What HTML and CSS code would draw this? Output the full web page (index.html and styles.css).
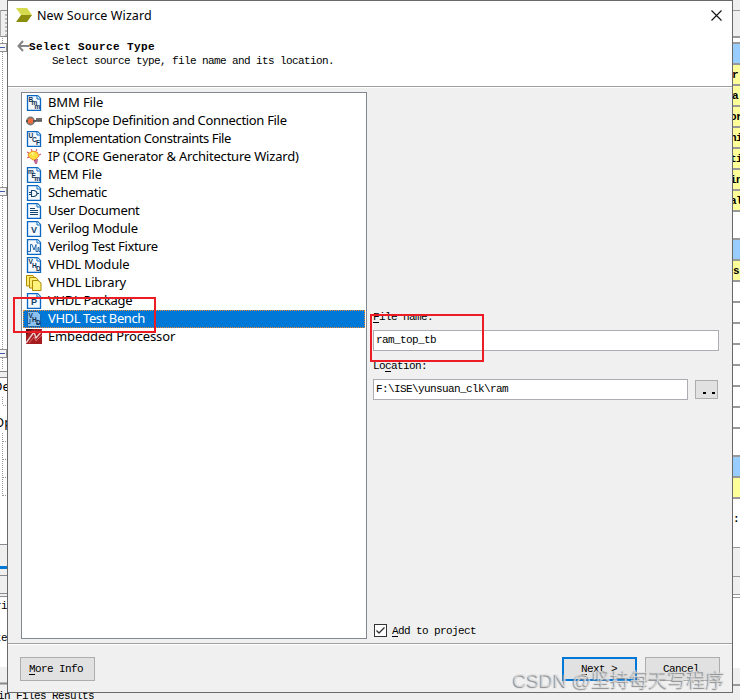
FILE: index.html
```
<!DOCTYPE html>
<html lang="en">
<head>
<meta charset="utf-8">
<title>New Source Wizard</title>
<link rel="stylesheet" href="styles.css">
</head>
<body>
<svg width="0" height="0" class="defs">
  <defs>
    <g id="doc"><path d="M1.5 .5H11.5L14.5 3.5V15.5H1.5Z" fill="#f4faff" stroke="#0868c4" stroke-width="1.3"/><path d="M11 .5V4H14.5" fill="#fff" stroke="#0868c4"/></g>
  </defs>
</svg>
<div class="desktop">
  <div class="backdrop">
    <svg class="left-strip" width="8" height="700" viewBox="0 0 8 700">
      <rect width="8" height="700" fill="#fff"/>
      <rect width="8" height="37" fill="#efefef"/>
      <path d="M0 10.5H7M0 36.5H8" stroke="#8a8a8a" fill="none"/>
      <path d="M.5 10V37" stroke="#aaa"/><path d="M6 14V36" stroke="#bbb" stroke-width="2" stroke-dasharray="2 2"/>
      <path d="M2.5 38V370M2.5 397V405M3 405.5H8M2.5 433V496M3 441.5H8M3 459.5H8M3 477.5H8M3 495.5H8" stroke="#999" stroke-dasharray="1 1" fill="none"/>
      <g fill="#f5f5f5" stroke="#919191"><rect x="-2.5" y="43.5" width="9" height="8"/><rect x="-2.5" y="187.5" width="9" height="8"/><rect x="-2.5" y="349.5" width="9" height="8"/></g>
      <path d="M0 47.5H5M0 191.5H5M0 353.5H5" stroke="#405aa8"/>
      <rect y="371" width="8" height="7" fill="#efefef"/>
      <path d="M0 371.5H8M0 377.5H8" stroke="#888"/>
      <text x="-7" y="391" class="ui">De</text><text x="-6" y="427" class="ui">Op</text>
      <rect y="544" width="8" height="53" fill="#efefef"/>
      <path d="M0 544.5H8M0 575.5H8M0 593.5H8M0 596.5H8" stroke="#8a8a90"/>
      <rect y="566" width="8" height="3" fill="#0078d7"/>
      <text x="-5" y="609" class="mono">ri</text><text x="-5" y="641" class="mono">te</text>
      <rect y="667" width="8" height="33" fill="#efefef"/>
      <path d="M0 683.5H8" stroke="#888" stroke-width="2"/>
    </svg>
    <div class="right-strip">
      <i class="cell gray h11"></i><i class="cell gray thick h27"></i><i class="cell h6"></i>
      <i class="cell blue"></i><i class="cell yellow">r</i><i class="cell yellow">a</i><i class="cell yellow cut">or</i><i class="cell yellow cut">ni</i><i class="cell yellow cut">ti</i><i class="cell yellow cut">in</i><i class="cell yellow cut">al</i>
      <i class="cell h28"></i><i class="cell blue"></i><i class="cell yellow s">s</i>
      <i class="cell"></i><i class="cell"></i><i class="cell"></i><i class="cell"></i><i class="cell"></i><i class="cell"></i><i class="cell"></i>
      <i class="cell h28"></i><i class="cell blue"></i><i class="cell yellow"></i>
      <i class="cell h49">::</i><i class="cell gray h29"></i><i class="cell gray h18"></i><i class="cell h3"></i><i class="cell plain h70"></i><i class="cell gray thick h18"></i>
    </div>
    <div class="results">in Files Results</div>
  </div>

  <main class="window">
    <header class="head">
      <div class="titlebar">
        <svg class="logo" width="17" height="15" viewBox="0 0 17 15"><path d="M0 0H11L16 7H5Z" fill="#d5db4c"/><path d="M5 7H16L11 14H0Z" fill="#8b8d0c"/></svg>
        <span class="title">New Source Wizard</span>
        <svg class="close" width="11" height="11" viewBox="0 0 11 11"><path d="M.5 .5L10.5 10.5M10.5 .5L.5 10.5" stroke="#111" stroke-width="1.1"/></svg>
      </div>
      <div class="heading">
        <svg class="back" width="13" height="12" viewBox="0 0 13 12"><path d="M6 1L1.5 6L6 11M2 6H12.5" fill="none" stroke="#858585" stroke-width="2"/></svg>
        <b>Select Source Type</b>
      </div>
      <p class="sub">Select source type, file name and its location.</p>
    </header>

    <section class="body">
      <ul class="types">
        <li class="wide"><svg viewBox="0 0 16 16"><use href="#doc"/><g class="g"><text x="2.5" y="7">B</text><text x="5.5" y="10">m</text><text x="8.5" y="13.5">m</text></g></svg><span>BMM File</span></li>
        <li><svg viewBox="0 0 16 16"><path d="M8 8H16M11 8V5M13 8V5M15 8V5" stroke="#555" stroke-width="1.7" fill="none"/><circle cx="4.5" cy="8" r="3.6" fill="#f36b3b" stroke="#777" stroke-width="1.6"/><path d="M0 8H2M7 8H10" stroke="#555" stroke-width="2"/></svg><span>ChipScope Definition and Connection File</span></li>
        <li class="tight"><svg viewBox="0 0 16 16"><use href="#doc"/><g class="g"><text x="2.5" y="7">U</text><text x="6" y="10.5">C</text><text x="10" y="14">F</text></g></svg><span>Implementation Constraints File</span></li>
        <li class="mid"><svg viewBox="0 0 16 16"><path d="M2 5L6 2L11 3L13 7L9 11H7L3 8Z" fill="#ffdf3d" stroke="#f08b29"/><path d="M5 4L8 3L7 7" fill="#fff59a"/><path d="M1 3L3 4M5 0L6 2M11 0L10 2M15 5L13 6M1 9L3 8" stroke="#c94369"/><path d="M8 11L12 10L11 15H9Z" fill="#9e3268"/><path d="M9 12H12M9 14H11" stroke="#eba2bd"/></svg><span>IP (CORE Generator &amp; Architecture Wizard)</span></li>
        <li class="wide"><svg viewBox="0 0 16 16"><use href="#doc"/><g class="g"><text x="2" y="6.5">m</text><text x="5.5" y="10.5">E</text><text x="8.5" y="14">m</text></g></svg><span>MEM File</span></li>
        <li class="tight"><svg viewBox="0 0 16 16"><use href="#doc"/><path d="M5.5 5.5H8Q11 6 11 8.5Q11 11 8 11.5H5.5ZM3 7.5H5M3 9.5H5M11 8.5H13" fill="none" stroke="#17456e" stroke-width="1.1"/></svg><span>Schematic</span></li>
        <li><svg viewBox="0 0 16 16"><use href="#doc"/><path d="M4 5.5H9M4 7.5H12M4 9.5H12M4 11.5H12" stroke="#17456e"/></svg><span>User Document</span></li>
        <li class="mid"><svg viewBox="0 0 16 16"><use href="#doc"/><text x="5" y="12" class="big">V</text></svg><span>Verilog Module</span></li>
        <li><svg viewBox="0 0 16 16"><use href="#doc"/><path d="M2 12.5H4.5V5.5H6L8 11L10 5.5V12.5H12V8.5H13V12.5H15" fill="none" stroke="#286bab"/></svg><span>Verilog Test Fixture</span></li>
        <li class="mid"><svg viewBox="0 0 16 16"><use href="#doc"/><g class="g"><text x="2.5" y="7">V</text><text x="6" y="10.5">H</text><text x="10" y="14">D</text></g></svg><span>VHDL Module</span></li>
        <li class="wide"><svg viewBox="0 0 16 16"><g fill="#ffec70" stroke="#ad8a00"><path d="M.5 .5H7L9 3V11H.5Z"/><path d="M3.5 2.5H10L12 5V13H3.5Z"/><path d="M6.5 5.5H12L15 8V15.5H6.5Z" fill="#fff47e"/></g></svg><span>VHDL Library</span></li>
        <li><svg viewBox="0 0 16 16"><use href="#doc"/><text x="5" y="12" class="big">P</text></svg><span>VHDL Package</span></li>
        <li class="selected tight"><svg viewBox="0 0 16 16"><path d="M1.5 .5H11.5L14.5 3.5V15.5H1.5Z" fill="#8cc0ec" stroke="#1765ae"/><path d="M2 12.5H4V8M10 12.5H15" stroke="#225b91" fill="none"/><g class="g"><text x="2.5" y="7">V</text><text x="6" y="10.5">H</text><text x="10" y="14">D</text></g></svg><span>VHDL Test Bench</span></li>
        <li class="wide"><svg viewBox="0 0 16 16"><rect width="16" height="15" fill="#a51c20"/><path d="M0 0H7L0 6Z" fill="#4d1518"/><path d="M0 14L8 3L10 9L16 2" stroke="#edcccc" fill="none" stroke-width="1.4"/><path d="M3 14L8 8L10 12L16 6" stroke="#df6264" fill="none"/></svg><span>Embedded Processor</span></li>
      </ul>

      <div class="form">
        <label class="lab"><u>F</u>ile name:</label>
        <div class="field name">ram_top_tb</div>
        <label class="lab loc">Lo<u>c</u>ation:</label>
        <div class="row"><div class="field path">F:\ISE\yunsuan_clk\ram</div><div class="browse"><i></i><i></i></div></div>
        <div class="check"><svg width="13" height="13" viewBox="0 0 13 13"><rect x=".5" y=".5" width="12" height="12" fill="#fff" stroke="#333"/><path d="M2.5 6.5L5 9L10.5 3.5" fill="none" stroke="#333" stroke-width="1.4"/></svg><span><u>A</u>dd to project</span></div>
      </div>
    </section>

    <footer class="foot">
      <div class="btn more"><span><u>M</u>ore Info</span></div>
      <div class="btn primary"><span><u>N</u>ext &gt;</span></div>
      <div class="btn more"><span>Cancel</span></div>
    </footer>
  </main>
  <div class="mark mark-type"></div>
  <div class="mark mark-name"></div>
  <div class="watermark">CSDN @坚持每天写程序</div>
</div>
</body>
</html>
```
FILE: styles.css
```
* { box-sizing: border-box; }
body { margin: 0; background: #efefef; }
.defs { position: absolute; }
.desktop { position: relative; width: 740px; height: 700px; overflow: hidden; font: 11px/12px "Liberation Mono", monospace; letter-spacing: -0.6px; color: #000; }
.backdrop { display: flex; justify-content: space-between; height: 700px; }
.left-strip { display: block; }
.ui { font: 13px "Noto Sans", sans-serif; letter-spacing: 0; }
.mono { font: 11px "Liberation Mono", monospace; }
.right-strip { width: 8px; display: flex; flex-direction: column; }
.cell { flex: none; display: block; height: 21px; line-height: 21px; border-bottom: 2px solid #999; background: #fff; font-style: normal; font-weight: bold; overflow: hidden; white-space: nowrap; }
.gray { background: #efefef; border-bottom-width: 1px; }
.thick { border-bottom-width: 2px; }
.blue { background: #99ccff; }
.yellow { background: #ffff99; }
.cut { text-indent: -2px; }
.s { padding-left: 1px; }
.plain { border: 0; }
.h11 { height: 11px; } .h27 { height: 27px; } .h6 { height: 6px; } .h28 { height: 28px; }
.h49 { height: 49px; line-height: 40px; border-bottom-width: 1px; padding-left: 1px; }
.h29 { height: 29px; } .h18 { height: 18px; } .h3 { height: 3px; border-bottom-width: 1px; } .h70 { height: 70px; }
.results { position: absolute; left: -2px; top: 690px; }

.window { position: absolute; left: 7px; top: 0; width: 726px; height: 693px; border: 1px solid #696969; background: #f0f0f0; display: flex; flex-direction: column; }
.head { height: 86px; flex: none; background: #fff; border-bottom: 1px solid #a0a0a0; box-shadow: 0 1px #fff; }
.titlebar { display: flex; align-items: center; height: 29px; padding: 0 10px 0 8px; }
.title { margin-left: 4px; flex: 1; font: 12.5px/18px "Noto Sans", sans-serif; letter-spacing: 0.1px; }
.heading { display: flex; align-items: center; height: 16px; margin-top: 9px; padding-left: 9px; letter-spacing: 0.4px; }
.heading b { margin-left: -1px; }
.back { margin-top: -3px; }
.sub { margin: 0 0 0 44px; }
.body { display: flex; height: 556px; padding: 5px 0 0 13px; flex: none; }
.types { list-style: none; margin: 0; padding: 1px; width: 346px; height: 547px; border: 1px solid #828790; background: #fff; font: 13px/18px "Noto Sans", sans-serif; letter-spacing: -0.32px; }
.types .tight { letter-spacing: -0.42px; }
.types .mid { letter-spacing: -0.2px; }
.types .wide { letter-spacing: -0.13px; }
.types li { display: flex; align-items: center; height: 18px; padding-left: 3px; }
.types svg { width: 16px; height: 16px; flex: none; }
.types span { margin: -2px 0 0 6px; white-space: nowrap; }
.types .selected { background: #0078d7; color: #fff; outline: 1px dotted #e78a32; outline-offset: -1px; }
.g { font: bold 6.5px "Liberation Sans", sans-serif; fill: #102f50; letter-spacing: 0; }
.big { font: bold 9px "Liberation Sans", sans-serif; fill: #17456e; }
.form { display: flex; flex-direction: column; width: 346px; margin-left: 6px; padding-top: 219px; }
.lab { display: block; height: 12px; }
.field { height: 21px; border: 1px solid #abadb3; background: #fff; padding: 0 2px; line-height: 19px; }
.name { margin-top: 7px; }
.loc { margin-top: 9px; }
.row { display: flex; margin-top: 7px; }
.path { width: 315px; }
.browse { display: flex; justify-content: flex-end; align-items: flex-end; gap: 6px; width: 23px; height: 19px; margin: 1px 0 0 7px; padding: 0 2px 4px; border: 1px solid #adadad; background: #e1e1e1; }
.browse i { width: 3px; height: 2px; background: #000; }
.check { display: flex; align-items: center; gap: 5px; height: 13px; margin: 224px 0 0 1px; }
.foot { flex: 1; display: flex; border-top: 1px solid #a0a0a0; box-shadow: inset 0 1px #fff; padding: 13px 12px; }
.btn { display: flex; align-items: center; justify-content: center; width: 75px; height: 24px; border: 1px solid #adadad; background: #e1e1e1; }
.btn + .btn { margin-left: 8px; }
.btn.more { padding-right: 3px; }
.btn.primary { margin-left: auto; border: 2px solid #0078d7; padding-right: 1px; }
.btn.btn.primary { margin-left: auto; }
u { text-underline-offset: 2px; text-decoration-thickness: 1px; }
.mark { position: absolute; border: 2px solid #ed1c24; }
.mark-type { left: 13px; top: 297px; width: 143px; height: 36px; }
.mark-name { left: 370px; top: 314px; width: 114px; height: 48px; }
.watermark { position: absolute; left: 513px; top: 668px; font: 19px/26px "Liberation Sans", "Noto Sans CJK SC", sans-serif; white-space: nowrap; color: rgba(225,225,225,.75); text-shadow: -1px 1px 1px #888; letter-spacing: 0.05px; }
```
